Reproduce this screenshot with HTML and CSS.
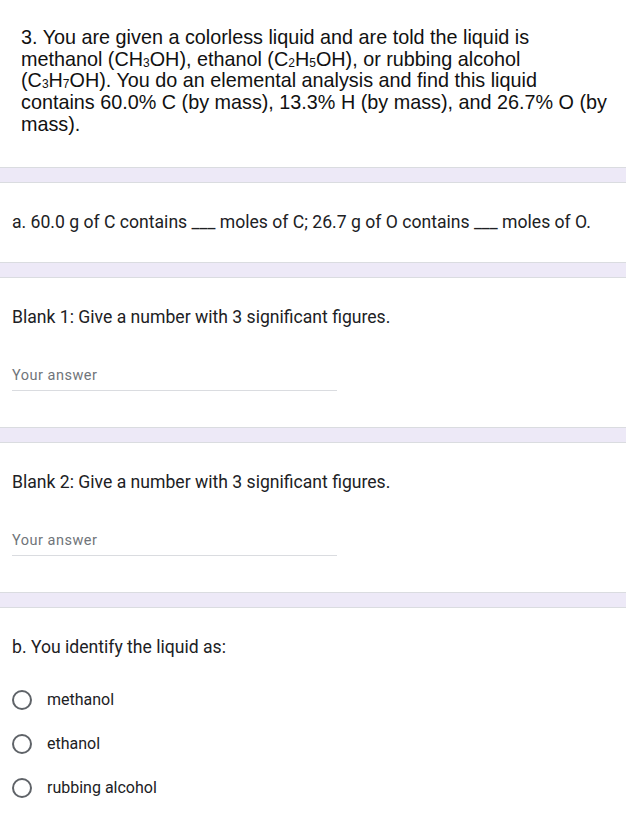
FILE: index.html
```html
<!DOCTYPE html>
<html>
<head>
<meta charset="utf-8">
<link rel="stylesheet" href="styles.css">
</head>
<body>
<div class="page">
  <section class="header">
    <p class="prompt">3. You are given a colorless liquid and are told the liquid is methanol (CH<sub>3</sub>OH), ethanol (C<sub>2</sub>H<sub>5</sub>OH), or rubbing alcohol (C<sub>3</sub>H<sub>7</sub>OH). You do an elemental analysis and find this liquid contains 60.0% C (by mass), 13.3% H (by mass), and 26.7% O (by mass).</p>
  </section>
  <div class="band"></div>
  <section class="item item-a">
    <div class="title">a. 60.0 g of C contains ___ moles of C; 26.7 g of O contains ___ moles of O.</div>
  </section>
  <div class="band"></div>
  <section class="item">
    <div class="title">Blank 1: Give a number with 3 significant figures.</div>
    <div class="answer">Your answer</div>
  </section>
  <div class="band"></div>
  <section class="item">
    <div class="title">Blank 2: Give a number with 3 significant figures.</div>
    <div class="answer">Your answer</div>
  </section>
  <div class="band"></div>
  <section class="item item-b">
    <div class="title">b. You identify the liquid as:</div>
    <div class="options">
      <div class="option"><span class="radio"></span><span class="label">methanol</span></div>
      <div class="option"><span class="radio"></span><span class="label">ethanol</span></div>
      <div class="option"><span class="radio"></span><span class="label">rubbing alcohol</span></div>
    </div>
  </section>
</div>
</body>
</html>
```

FILE: styles.css
```css
html, body {
  margin: 0;
  padding: 0;
  background: #fff;
}
.page {
  width: 626px;
  font-family: Roboto, "Liberation Sans", sans-serif;
  color: #202124;
}
.header {
  height: 167px;
  padding: 27px 14px 0 21px;
  box-sizing: border-box;
}
.prompt {
  margin: 0;
  font-family: "Liberation Sans", Arial, sans-serif;
  font-size: 19.8px;
  line-height: 21.7px;
  color: #111;
}
.prompt sub {
  font-size: 12px;
  line-height: 0;
  vertical-align: baseline;
  position: relative;
  top: 1px;
}
.band {
  background: #ede9f7;
  border-top: 1px solid #dadce0;
  border-bottom: 1px solid #dadce0;
  box-sizing: border-box;
  height: 16px;
}
.item {
  padding: 27px 12px 36px 12px;
}
.item-a {
  padding-bottom: 28px;
}
.title {
  font-size: 17.6px;
  line-height: 24px;
}
.answer {
  margin-top: 37px;
  width: 325px;
  font-size: 14.5px;
  letter-spacing: 0.5px;
  line-height: 20px;
  color: #70757a;
  padding-bottom: 4px;
  border-bottom: 1px solid #dadce0;
}
.options {
  margin-top: 31px;
  display: flex;
  flex-direction: column;
  gap: 24px;
  padding-bottom: 20px;
}
.option {
  display: flex;
  align-items: center;
  height: 20px;
}
.radio {
  width: 20px;
  height: 20px;
  box-sizing: border-box;
  border: 2px solid #5f6368;
  border-radius: 50%;
  flex: none;
}
.label {
  margin-left: 15px;
  font-size: 16px;
  line-height: 20px;
}
```
